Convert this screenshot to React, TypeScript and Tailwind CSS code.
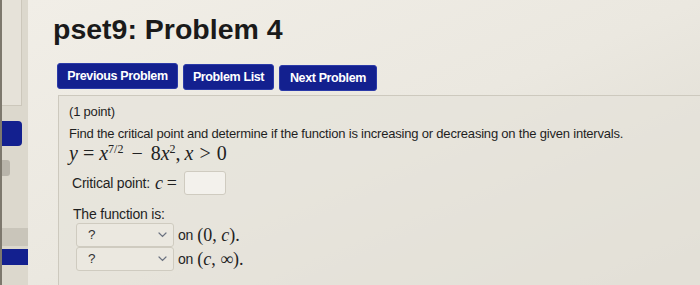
import React from "react";

const sans = { fontFamily: '"Liberation Sans", Arial, sans-serif' };
const serif = { fontFamily: '"Liberation Serif", "Times New Roman", serif' };

function Chevron() {
  return (
    <svg width="9" height="6" viewBox="0 0 9 6" className="text-[#6b7280]">
      <path d="M1 1l3.5 3.5L8 1" fill="none" stroke="currentColor" strokeWidth="1.2" strokeLinecap="round" />
    </svg>
  );
}

function Select() {
  return (
    <div className="flex h-[24px] w-[98px] shrink-0 items-center justify-between rounded-[3px] border border-[#cfcbc0] bg-[#ebe8e0] pl-[11px] pr-[6px]">
      <span className="text-[13.5px] text-[#333]">?</span>
      <Chevron />
    </div>
  );
}

function NavButton({ label, w, extra }: { label: string; w: string; extra?: string }) {
  return (
    <button
      type="button"
      className={`flex h-[26px] items-center justify-center rounded-[3px] border border-[#2b3aa8] bg-[#13208f] text-[12.5px] font-bold tracking-[-0.03em] text-white ${w} ${extra ?? ""}`}
    >
      {label}
    </button>
  );
}

export default function App() {
  return (
    <div className="flex h-[285px] w-[700px] overflow-hidden bg-[#ebe8e0]" style={sans}>
      {/* side strip */}
      <div className="flex w-[28px] shrink-0 flex-col border-l-[2px] border-[#7d786d] bg-[#dcd8cd]">
        <div className="h-[106px] w-[20px] border-r border-b border-[#ccc7bb] bg-[#e6e2d9]" />
        <div className="mt-[15px] h-[25px] w-[20px] rounded-r-[4px] bg-[#13208f]" />
        <div className="mt-[14px] h-[16px] w-[8px] rounded-r-[3px] bg-[#b8b4aa]" />
        <div className="mt-[52px] h-[18px] w-[26px] bg-[#c9c5ba]" />
        <div className="mt-[3px] h-[16px] w-[28px] bg-[#13208f]" />
      </div>

      {/* main */}
      <div className="flex flex-1 flex-col bg-gradient-to-br from-[#f1eee7] via-[#ebe8e0] to-[#dcd9cf] pl-[30px] pt-[13px]">
        <h1 className="-ml-[5px] text-[28.5px] font-bold leading-[32px] text-[#1a1a1a]">pset9: Problem 4</h1>

        <div className="mt-[18px] -ml-[1px] flex items-start gap-[5px]">
          <NavButton label="Previous Problem" w="w-[121px]" />
          <NavButton label="Problem List" w="w-[91px]" extra="mt-[1px]" />
          <NavButton label="Next Problem" w="w-[98px]" extra="mt-[2px]" />
        </div>

        <div className="mt-[4px] flex-1 border-t border-l border-[#cdc9be] bg-[#e6e3da]/70 pl-[10px] pt-[7px] text-[13px] tracking-[-0.2px] text-[#1f1f1f]">
          <div className="leading-[18px]">(1 point)</div>
          <div className="mt-[4px] leading-[17px]">
            Find the critical point and determine if the function is increasing or decreasing on the given intervals.
          </div>
          <div className="flex h-[21px] items-end text-[20px] leading-[20px] tracking-normal text-[#222]" style={serif}>
            <i>y</i>
            <span className="mx-[5px]">=</span>
            <i>x</i>
            <span className="relative -top-[8px] text-[12px] leading-none">7/2</span>
            <span className="mx-[8px]">−</span>
            <span>8</span>
            <i>x</i>
            <span className="relative -top-[8px] text-[12px] leading-none">2</span>
            <span>,</span>
            <i className="ml-[4px]">x</i>
            <span className="mx-[6px]">&gt;</span>
            <span>0</span>
          </div>

          <div className="mt-[8px] flex items-center pl-[3px] text-[14px]">
            <span>Critical point:</span>
            <i className="ml-[5px] text-[18px] leading-none" style={serif}>
              c
            </i>
            <span className="ml-[4px] text-[18px] leading-none" style={serif}>
              =
            </span>
            <div className="ml-[7px] h-[24px] w-[42px] rounded-[3px] border border-[#cfcbc0] bg-[#f3f1ec]" />
          </div>

          <div className="mt-[10px] pl-[4px] text-[14px] leading-[18px]">The function is:</div>

          <div className="flex flex-col pl-[7px] text-[14px]">
            <div className="flex h-[24px] items-center">
              <Select />
              <span className="ml-[4px] leading-none">on</span>
              <span className="ml-[4px] text-[18px] leading-none tracking-normal" style={serif}>
                (0, <i>c</i>).
              </span>
            </div>
            <div className="flex h-[24px] items-center">
              <Select />
              <span className="ml-[4px] leading-none">on</span>
              <span className="ml-[4px] text-[18px] leading-none tracking-normal" style={serif}>
                (<i>c</i>, ∞).
              </span>
            </div>
          </div>
        </div>
      </div>
    </div>
  );
}
